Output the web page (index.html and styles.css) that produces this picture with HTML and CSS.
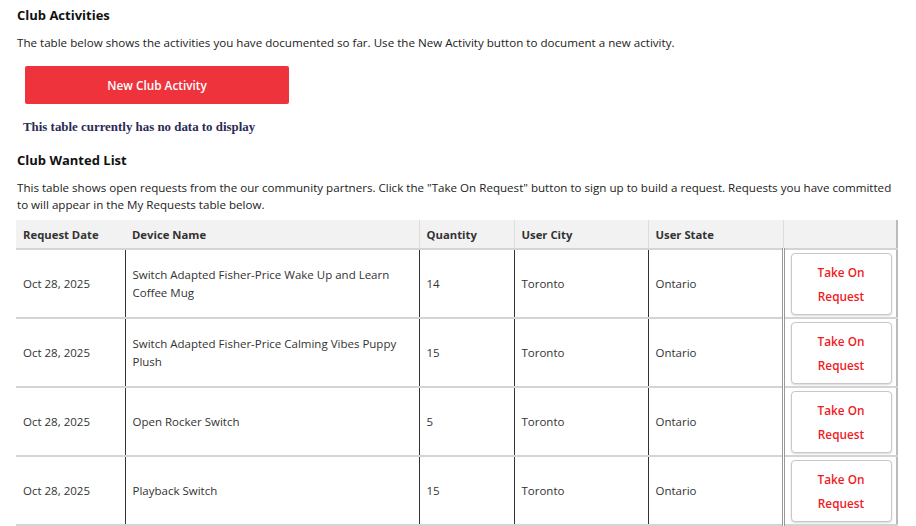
FILE: index.html
```html
<!DOCTYPE html>
<html lang="en">
<head>
  <meta charset="UTF-8" />
  <meta name="viewport" content="width=device-width, initial-scale=1.0"/>
  <title>Club Dashboard</title>
  <link rel="stylesheet" href="styles.css">
</head>
<body>
  <section class="section">
    <h2>Club Activities</h2>
    <p>The table below shows the activities you have documented so far. Use the New Activity button to document a new activity.</p>
    <button class="new-activity">New Club Activity</button>
    <div class="empty">This table currently has no data to display</div>
  </section>

  <section class="section">
    <h2>Club Wanted List</h2>
    <p>This table shows open requests from the our community partners. Click the "Take On Request" button to sign up to build a request. Requests you have committed to will appear in the My Requests table below.</p>

    <table class="wanted">
      <colgroup>
        <col class="c-date">
        <col class="c-name">
        <col class="c-qty">
        <col class="c-city">
        <col class="c-state">
        <col class="c-action">
      </colgroup>
      <thead>
        <tr>
          <th>Request Date</th>
          <th class="no-line">Device Name</th>
          <th>Quantity</th>
          <th>User City</th>
          <th>User State</th>
          <th></th>
        </tr>
      </thead>
      <tbody>
        <tr>
          <td>Oct 28, 2025</td>
          <td>Switch Adapted Fisher-Price Wake Up and Learn Coffee Mug</td>
          <td>14</td>
          <td>Toronto</td>
          <td>Ontario</td>
          <td class="action"><button class="take">Take On Request</button></td>
        </tr>
        <tr>
          <td>Oct 28, 2025</td>
          <td>Switch Adapted Fisher-Price Calming Vibes Puppy Plush</td>
          <td>15</td>
          <td>Toronto</td>
          <td>Ontario</td>
          <td class="action"><button class="take">Take On Request</button></td>
        </tr>
        <tr>
          <td>Oct 28, 2025</td>
          <td>Open Rocker Switch</td>
          <td>5</td>
          <td>Toronto</td>
          <td>Ontario</td>
          <td class="action"><button class="take">Take On Request</button></td>
        </tr>
        <tr>
          <td>Oct 28, 2025</td>
          <td>Playback Switch</td>
          <td>15</td>
          <td>Toronto</td>
          <td>Ontario</td>
          <td class="action"><button class="take">Take On Request</button></td>
        </tr>
      </tbody>
    </table>
  </section>
</body>
</html>
```

FILE: styles.css
```css
body {
  margin: 0;
  padding: 6px 19px 0 16px;
  font-family: "Open Sans", sans-serif;
  color: #333;
  background: #fff;
}

h2 {
  margin: 0 0 0 1px;
  font-size: 13px;
  font-weight: 700;
  color: #111;
  line-height: 18px;
}

p {
  margin: 10px 0 0 1px;
  font-size: 11.6px;
  line-height: 17px;
  color: #222;
}

.section + .section {
  margin-top: 16px;
}

.new-activity {
  display: block;
  margin: 15px 0 0 9px;
  width: 264px;
  height: 38px;
  border: none;
  border-radius: 2px;
  background: #ee333d;
  color: #fff;
  font-family: "Open Sans", sans-serif;
  font-size: 11.8px;
  font-weight: 600;
  cursor: pointer;
}

.empty {
  margin: 15px 0 0 7px;
  font-family: "Liberation Serif", serif;
  font-size: 12.9px;
  font-weight: 700;
  color: #2b2b55;
  line-height: 16px;
}

.wanted {
  margin-top: 7px;
  width: 881px;
  border-collapse: collapse;
  table-layout: fixed;
  font-size: 11.5px;
  border-right: 2px solid #bbb;
}

.c-date { width: 109px; }
.c-name { width: 294px; }
.c-qty { width: 95px; }
.c-city { width: 134px; }
.c-state { width: 135px; }
.c-action { width: 114px; }

.wanted th {
  height: 28px;
  padding: 0 7px;
  text-align: left;
  font-size: 11.3px;
  font-weight: 700;
  color: #333;
  background: #f2f2f2;
  border-left: 1px solid #ddd;
  border-bottom: 2px solid #d4d4d4;
}

.wanted th:first-child,
.wanted th.no-line {
  border-left: none;
}

.wanted td {
  height: 67px;
  padding: 0 7px;
  line-height: 18px;
  border-left: 1px solid #333;
  border-bottom: 2px solid #d4d4d4;
}

.wanted td:first-child {
  border-left: none;
}

.wanted td.action {
  padding: 0 6px;
  border-left: 3px double #999;
}

.take {
  display: block;
  width: 101px;
  height: 62px;
  padding: 6px 14px;
  border: 1px solid #c8c8c8;
  border-radius: 4px;
  background: #fff;
  box-shadow: 0 1px 2px rgba(0, 0, 0, 0.15);
  color: #ee1c25;
  font-family: "Open Sans", sans-serif;
  font-size: 11.8px;
  font-weight: 600;
  line-height: 24px;
  cursor: pointer;
}
```
